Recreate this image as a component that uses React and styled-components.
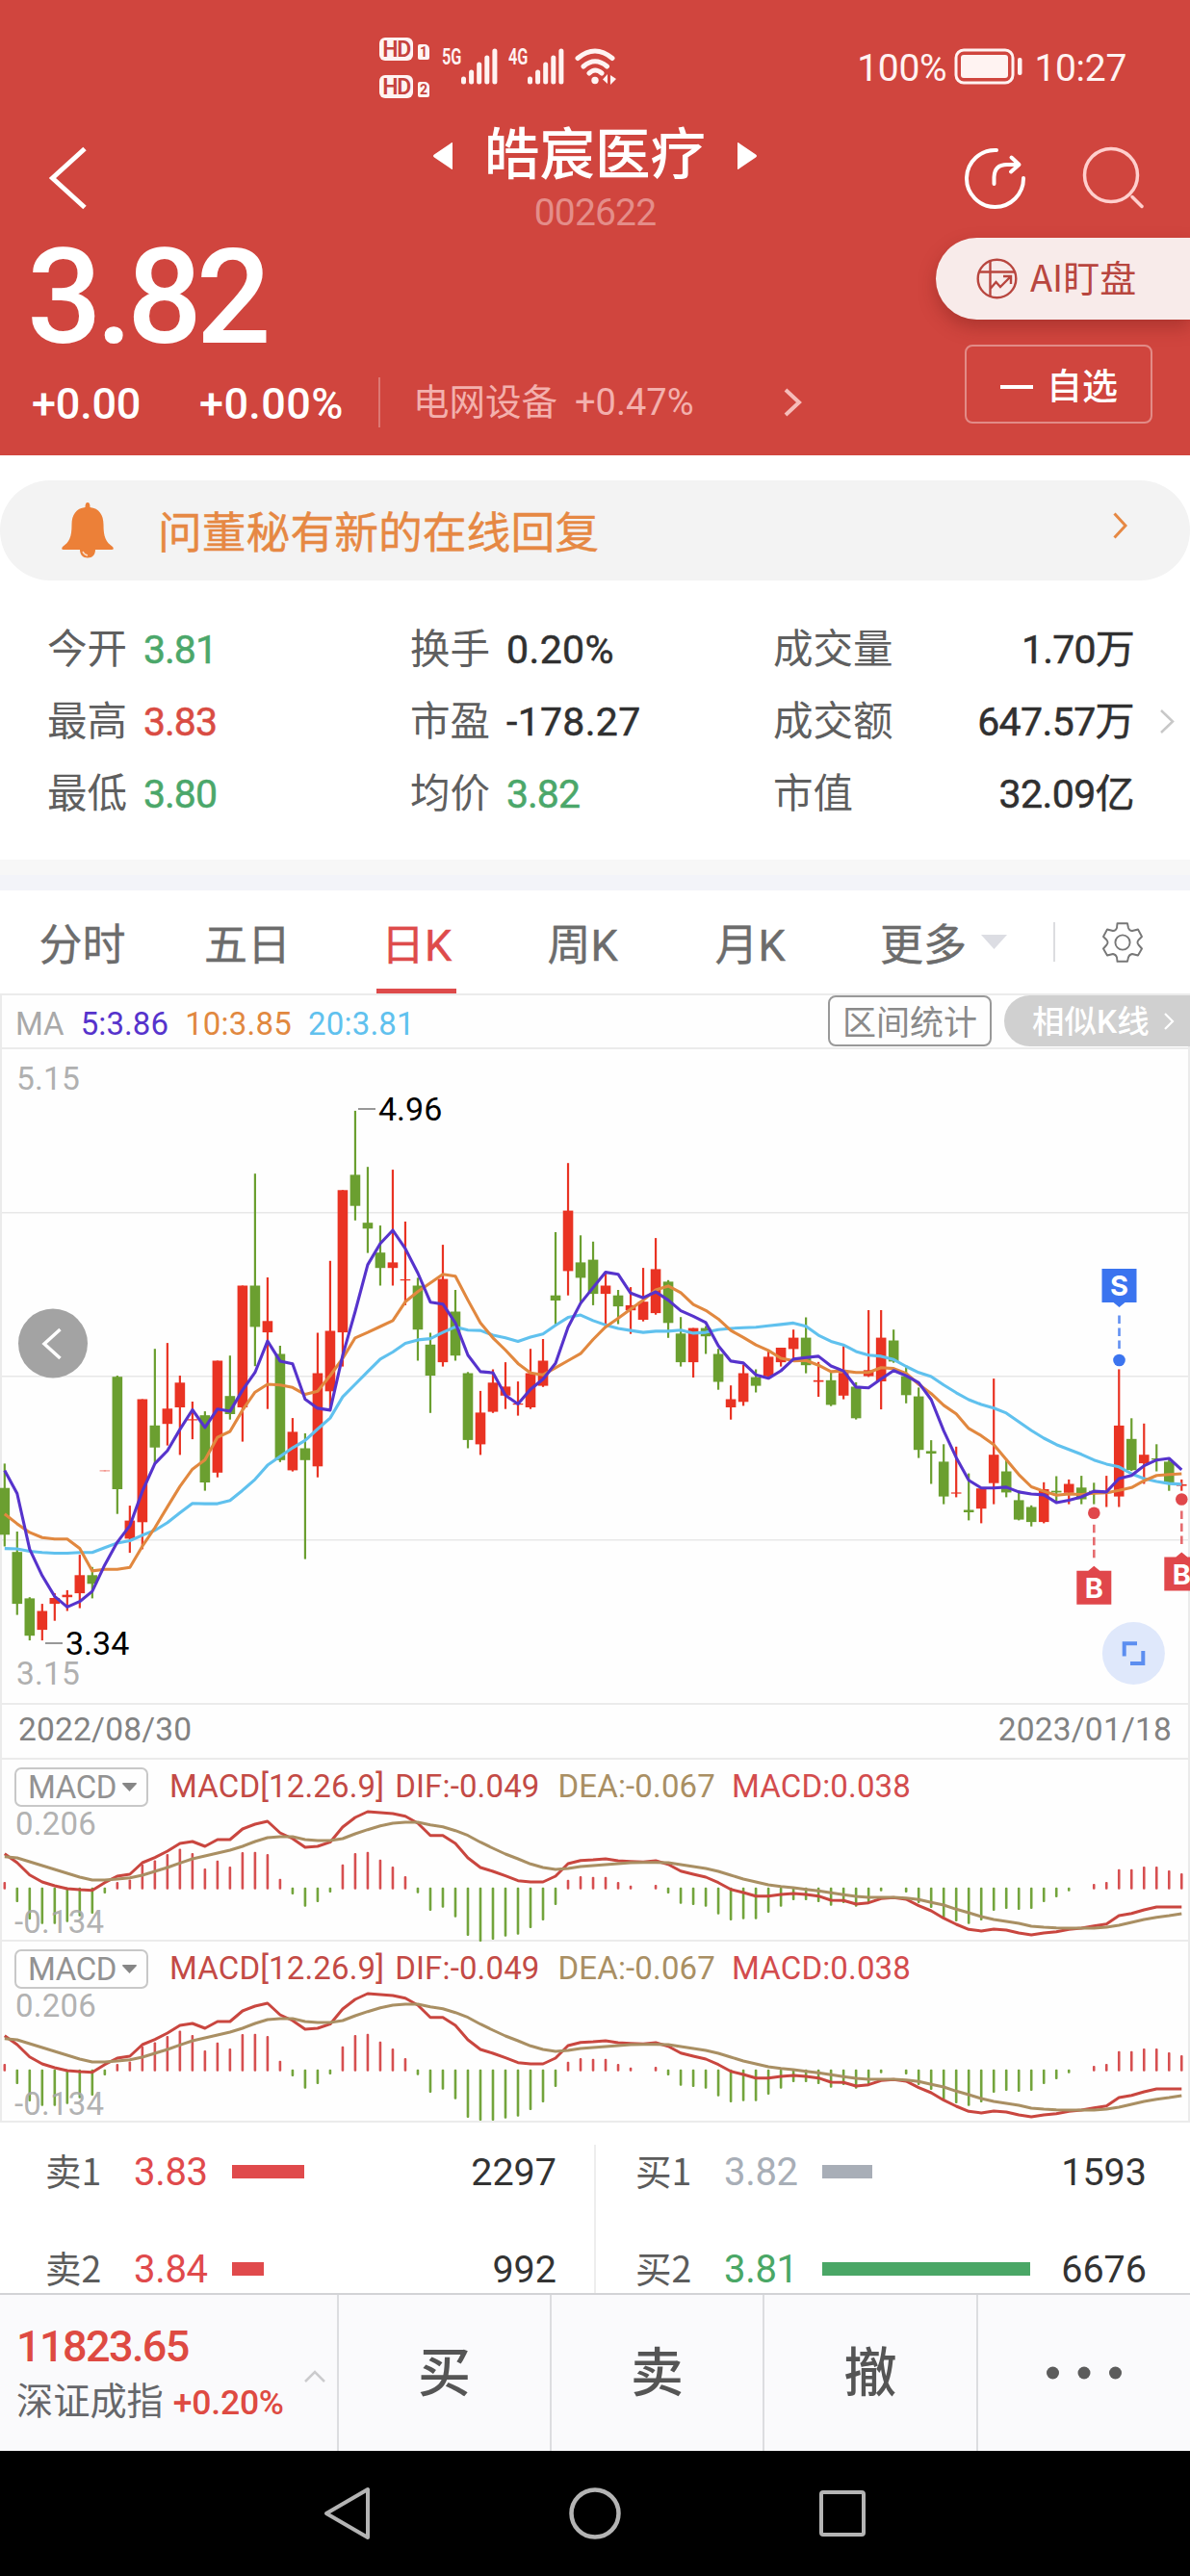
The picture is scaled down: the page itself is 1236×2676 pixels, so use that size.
import React from 'react'
import styled, { createGlobalStyle } from 'styled-components';

const GlobalStyle = createGlobalStyle`
  * {
    box-sizing: border-box;
  }

  body {
    margin: 0;
    background: #fff;
    font-family: Roboto, "Noto Sans CJK SC", sans-serif;
  }

  svg {
    display: block;
    flex-shrink: 0;
  }
`;

const Page = styled.div`
  width: 1236px;
  height: 2676px;
  overflow: hidden;
  display: flex;
  flex-direction: column;
  white-space: nowrap;
`;

const Header = styled.header`
  height: 473px;
  flex-shrink: 0;
  background: #d0453e;
  color: #fff;
`;

const StatusBar = styled.div`
  height: 120px;
  padding: 18px 66px 0 394px;
  display: flex;
  align-items: center;
  color: #fff3f2;
`;

const HdColumn = styled.div`
  display: flex;
  flex-direction: column;
  gap: 15px;
  margin: 3px 13px 0 0;
`;

const HdRow = styled.div`
  display: flex;
  align-items: flex-end;
  gap: 5px;
`;

const HdBadge = styled.span`
  width: 35px;
  height: 24px;
  border-radius: 6px;
  background: #fff3f2;
  color: #c5433d;
  font-size: 23px;
  font-weight: 600;
  line-height: 25px;
  letter-spacing: -1.5px;
  text-align: center;
`;

const SimBadge = styled.span`
  width: 12px;
  height: 16px;
  margin-bottom: 1px;
  border-radius: 2px 5px 2px 2px;
  background: #fff3f2;
  color: #c5433d;
  font-size: 14px;
  font-weight: 700;
  line-height: 17px;
  text-align: center;
`;

const NetworkType = styled.span`
  width: 20px;
  margin: 0 0 21px ${props => props.gap || 0}px;
  font-size: 24px;
  font-weight: 600;
  line-height: 24px;
  transform: scaleX(0.68);
  transform-origin: left center;
`;

const WifiSlot = styled.span`
  margin: 0 auto 0 11px;
`;

const BatterySlot = styled.span`
  margin: 0 11px 0 8px;
`;

const StatusText = styled.span`
  font-size: 39px;
  line-height: 40px;
  letter-spacing: -0.3px;
  margin-top: 3px;
`;

const NavRow = styled.div`
  height: 130px;
  display: grid;
  grid-template-columns: 1fr 338px 1fr;
`;

const NavLeft = styled.div`
  display: flex;
  align-items: center;
  padding-left: 47px;
`;

const NavRight = styled.div`
  display: flex;
  align-items: center;
  justify-content: flex-end;
  gap: 57px;
  padding-right: 46px;
`;

const TitleBlock = styled.div`
  padding-top: 9px;
`;

const TitleLine = styled.div`
  display: flex;
  align-items: center;
  justify-content: space-between;
  height: 66px;
  padding: 0 1px;
`;

const StockName = styled.h1`
  margin: 0;
  font-size: 57.5px;
  font-weight: 500;
  line-height: 66px;
`;

const StockCode = styled.div`
  color: #e48d89;
  font-size: 39px;
  line-height: 52px;
  letter-spacing: -0.8px;
  text-align: center;
`;

const QuoteRow = styled.div`
  display: flex;
  justify-content: space-between;
`;

const Price = styled.div`
  padding-left: 28px;
  height: 113px;
  font-size: 137px;
  font-weight: 500;
  line-height: 118px;
  letter-spacing: -6px;
`;

const ChangeRow = styled.div`
  display: flex;
  align-items: center;
  height: 110px;
  padding-left: 33px;
`;

const Change = styled.span`
  width: ${props => props.width}px;
  padding-top: 4px;
  font-size: 45px;
  font-weight: 500;
  line-height: 50px;
  letter-spacing: ${props => props.track}px;
`;

const Sector = styled.span`
  display: flex;
  align-items: center;
  height: 52px;
  padding-left: 34px;
  border-left: 2px solid #dd7873;
  color: #f3b0ad;
  font-size: 37.5px;
  line-height: 56px;
`;

const SectorChange = styled.span`
  margin: 0 94px 0 18px;
  font-size: 38px;
`;

const Actions = styled.div`
  display: flex;
  flex-direction: column;
  align-items: flex-end;
  margin-top: -3px;
`;

const AiButton = styled.div`
  display: flex;
  align-items: center;
  width: 264px;
  height: 85px;
  padding-left: 42px;
  border-radius: 43px 0 0 43px;
  background: #f8ebea;
  box-shadow: 0 8px 18px rgba(120, 30, 25, 0.4);
  color: #b8463f;
  font-family: "Noto Sans CJK SC", sans-serif;
  font-size: 38px;
  line-height: 60px;

  span {
    margin: -5px 0 0 13px;
  }
`;

const WatchButton = styled.div`
  display: flex;
  align-items: center;
  width: 195px;
  height: 82px;
  margin: 26px 39px 0 0;
  padding-left: 35px;
  border: 2px solid #e28b87;
  border-radius: 8px;
  font-size: 37px;
  font-weight: 500;
`;

const Minus = styled.span`
  width: 34px;
  height: 4px;
  margin: 6px 14px 0 0;
  background: #fff;
`;

const Notice = styled.div`
  display: flex;
  align-items: center;
  flex-shrink: 0;
  height: 104px;
  margin-top: 26px;
  padding: 0 65px 0 63px;
  border-radius: 52px;
  background: #f3f3f3;
  color: #e68843;
`;

const NoticeText = styled.span`
  flex: 1;
  margin: 7px 0 0 45px;
  font-size: 45.8px;
  line-height: 60px;
  -webkit-text-stroke: 0.4px currentColor;
`;

const NoticeArrow = styled.svg`
  margin-bottom: 11px;
`;

const Stats = styled.section`
  display: flex;
  align-items: center;
  flex-shrink: 0;
  height: 290px;
  padding: 3px 0 0 49px;
`;

const StatGrid = styled.div`
  display: grid;
  grid-template-columns: 377px 377px 375px;
  grid-auto-rows: 75px;
  margin-right: 26px;
`;

const Stat = styled.div`
  display: flex;
  align-items: center;
  gap: 17px;
  justify-content: ${props => props.spread ? 'space-between' : 'flex-start'};
  font-size: 41px;
  line-height: 60px;
`;

const StatLabel = styled.span`
  color: #5f5f5f;
  font-size: 41.5px;
`;

const StatValue = styled.span`
  color: ${props => props.color || '#303030'};
  letter-spacing: ${props => props.track || 0}px;
  -webkit-text-stroke: 0.5px currentColor;
`;

const Divider = styled.div`
  flex-shrink: 0;
  height: 32px;
  border-top: 16px solid #f7f7f7;
  background: #f3f4f9;
`;

const Tabs = styled.nav`
  display: grid;
  grid-template-columns: 171px 172px 179px 166px 182px 1fr;
  grid-template-rows: 107px;
  flex-shrink: 0;
  height: 107px;
  color: #6c6c6c;
  font-size: 45px;
  line-height: 115px;
  text-align: center;
`;

const Tab = styled.div`
  position: relative;
  height: 107px;
  color: ${props => props.active ? '#de4b4b' : '#6c6c6c'};
  -webkit-text-stroke: 0.4px currentColor;

  &::after {
    content: '';
    display: ${props => props.active ? 'block' : 'none'};
    position: absolute;
    left: 48px;
    bottom: 0;
    width: 83px;
    height: 5px;
    background: #de4b4b;
  }
`;

const MoreTab = styled.div`
  display: flex;
  align-items: center;
  height: 107px;
  padding-left: 44px;
`;

const MoreLabel = styled.span`
  margin: 7px 15px 0 0;
  -webkit-text-stroke: 0.4px currentColor;
`;

const TabSeparator = styled.span`
  width: 2px;
  height: 41px;
  margin: 0 49px 0 48px;
  background: #dcdde0;
`;

const ChartSection = styled.section`
  flex-shrink: 0;
  border-top: 2px solid #ebebeb;
  background: #fefefe;
  box-shadow: inset 2px 0 #ebebeb, inset -2px 0 #ebebeb;
`;

const MaRow = styled.div`
  display: flex;
  height: 56px;
  padding-left: 16px;
  border-bottom: 2px solid #ebebeb;
  font-size: 33px;
  line-height: 59px;
`;

const MaText = styled.span`
  margin-right: 17px;
  color: ${props => props.color};
  letter-spacing: ${props => props.track || 0}px;
`;

const RangeButton = styled.span`
  width: 170px;
  height: 53px;
  margin: 0 13px 0 auto;
  border: 2px solid #999;
  border-radius: 8px;
  color: #8a8a8a;
  font-size: 35px;
  line-height: 55px;
  text-align: center;
`;

const SimilarButton = styled.span`
  display: flex;
  align-items: center;
  width: 193px;
  height: 53px;
  padding-left: 29px;
  border-radius: 27px 0 0 27px;
  background: #d0d0d0;
  color: #fff;
  font-size: 33.5px;
  font-weight: 500;

  span {
    margin: 3px 14px 0 0;
    line-height: 56px;
  }
`;

const DateRow = styled.div`
  display: flex;
  justify-content: space-between;
  height: 57px;
  padding: 0 19px;
  border-top: 2px solid #ebebeb;
  color: #828282;
  font-size: 33.5px;
  line-height: 52px;
  letter-spacing: 0.2px;
`;

const Panel = styled.div`
  display: grid;
  height: ${props => props.last ? 190 : 189}px;
  border-top: 2px solid #ebebeb;
  border-bottom: ${props => props.last ? '2px solid #ebebeb' : 'none'};

  > * {
    grid-area: 1 / 1;
  }
`;

const PanelSvg = styled.svg`
  overflow: visible;
`;

const PanelTitle = styled.div`
  display: flex;
  align-items: center;
  height: 41px;
  margin-top: 8px;
  padding-left: 15px;
  font-size: 33px;
  z-index: 1;
`;

const IndicatorSelect = styled.span`
  display: flex;
  align-items: center;
  gap: 5px;
  width: 139px;
  height: 41px;
  margin-right: 22px;
  padding-left: 12px;
  border: 2px solid #c8c8c8;
  border-radius: 7px;
  color: #929292;
  line-height: 41px;

  span {
    width: 93px;
    letter-spacing: -0.4px;
  }
`;

const IndicatorText = styled.span`
  margin: -3px ${props => props.gap}px 0 0;
  color: ${props => props.color};
  letter-spacing: 0.15px;
`;

const OrderBook = styled.section`
  display: grid;
  grid-template-columns: 617px 1fr;
  flex-shrink: 0;
  height: 177px;
  overflow: hidden;
`;

const OrderSide = styled.div`
  padding-left: 47px;

  & + & {
    margin-top: 23px;
    padding-left: 41px;
    border-left: 2px solid #eee;
  }

  & + & > div:first-child {
    margin-top: -23px;
  }
`;

const OrderRow = styled.div`
  display: flex;
  align-items: center;
  width: 531px;
  height: 101px;
  padding-top: 1px;
  line-height: 101px;
`;

const OrderLabel = styled.span`
  width: 92px;
  margin-top: -5px;
  color: #5c5c5c;
  font-family: "Noto Sans CJK SC", sans-serif;
  font-size: 37.5px;
`;

const OrderPrice = styled.span`
  width: 102px;
  color: ${props => props.color};
  font-size: 40px;
  letter-spacing: -0.3px;
`;

const VolumeBar = styled.span`
  height: 14px;
  background: ${props => props.color};
`;

const Volume = styled.span`
  margin-left: auto;
  color: #333;
  font-size: 39.5px;
`;

const TradeBar = styled.footer`
  display: grid;
  grid-template-columns: 350px 221px 221px 222px 1fr;
  flex-shrink: 0;
  height: 164px;
  border-top: 2px solid #d2d3d6;
  background: #fafafc;
`;

const IndexBox = styled.div`
  display: flex;
  align-items: center;
  justify-content: space-between;
  padding: 6px 12px 0 17px;
`;

const IndexPrice = styled.div`
  color: #de4a42;
  font-size: 45px;
  font-weight: 500;
  line-height: 54px;
  letter-spacing: -1.6px;
`;

const IndexName = styled.div`
  color: #66676b;
  font-size: 38.2px;
  line-height: 60px;

  span {
    margin-left: 10px;
    color: #de4a42;
    font-size: 35.5px;
    font-weight: 500;
    letter-spacing: -0.2px;
  }
`;

const TradeButton = styled.div`
  display: flex;
  align-items: center;
  justify-content: center;
  border-left: 2px solid #dcdde0;
  color: #555;
  font-size: 55px;
  font-weight: 500;
  line-height: 80px;
`;

const SystemNav = styled.div`
  display: flex;
  align-items: center;
  justify-content: center;
  gap: 204px;
  flex: 1;
  padding-right: 1px;
  background: #000;
`;

const RED = '#e93323';
const GREEN = '#6b9f30';
const STEP = 13.005;
const x = index => 4.8 + index * STEP;

// [up, high, top of body, bottom of body, low]
const candles = [
  [0, 430.4, 455.7, 504.3, 516.5], [0, 501, 522.2, 576.1, 587.6], [0, 569.2, 570.4, 609.2, 614.1], [1, 576.1, 583.5, 603.1, 614.1],
  [1, 565.1, 570, 576.1, 593.7], [1, 561.9, 566.7, 569.2, 583.5], [1, 525.1, 546.3, 565.1, 580.6], [0, 537.8, 546.3, 555.3, 570.4],
  [1, 437.4, 437.4, 438.4, 438.4], [0, 339, 340.2, 457, 482.7], [1, 474.1, 489.6, 508.4, 523.1], [1, 363.5, 363.5, 491.3, 519.4],
  [0, 311.2, 390.8, 413.7, 431.2], [1, 305.1, 373.3, 389.2, 411.6], [1, 339, 346.3, 372, 421.4], [1, 366, 384.3, 385.5, 405.1],
  [0, 376.1, 380.2, 450, 458.6], [1, 323.5, 323.5, 439.8, 444.7], [0, 318.2, 360.2, 379, 384.7], [1, 245.5, 245.5, 372, 407.6],
  [0, 129.2, 245.5, 288.4, 329.2], [1, 237, 282.3, 294.1, 373.7], [0, 308, 316.5, 426.8, 428.8], [1, 383.1, 397.4, 437.4, 438.6],
  [0, 399, 414.5, 426.8, 529.6], [1, 294.5, 336.5, 433.3, 444.7], [1, 219.8, 292.5, 355.3, 374.9], [1, 146.3, 146.3, 294.1, 329.6],
  [0, 63.9, 130.4, 162.7, 177.8], [0, 122.2, 180.2, 186.3, 211.6], [0, 183.1, 211.2, 227.2, 245.5], [1, 125.1, 221.4, 227.2, 245.5],
  [1, 179, 239, 240.2, 265.9], [0, 237.4, 245.5, 291.2, 323.5], [0, 294.5, 306.8, 339, 377.8], [1, 203.1, 238.6, 325.1, 329.6],
  [0, 250, 272.5, 318.2, 323.5], [0, 335.3, 336.5, 405.9, 414.5], [1, 354.9, 377.4, 410.4, 421.4], [1, 332.5, 346.3, 376.6, 377.8],
  [1, 325.1, 350.4, 359.8, 373.7], [1, 345.1, 368, 369.2, 380.6], [1, 311.2, 336.5, 372, 373.7], [1, 301, 323.5, 349.6, 350.8],
  [0, 190, 255.7, 261, 287.6], [1, 118.2, 167.6, 230.4, 255.7], [0, 193.3, 221.4, 237.4, 265.1], [0, 199.8, 218.6, 254.1, 265.9],
  [1, 232.4, 245.5, 254.1, 289.6], [0, 250, 255.7, 267.1, 285.5], [1, 247.1, 265.9, 271.2, 295.7], [1, 227.1, 262.2, 281, 282.7],
  [1, 196.1, 228.4, 274.1, 275.7], [0, 239.8, 241.4, 284.3, 299.8], [0, 278.2, 295.3, 325.1, 329.6], [1, 289.6, 289.6, 325.1, 341],
  [0, 287.6, 289.6, 298.2, 316.5], [0, 311.2, 316.5, 345.5, 353.7], [1, 349.2, 363.5, 372, 384.7], [1, 327.6, 336.5, 366.3, 370.4],
  [0, 332.5, 340.6, 349.6, 356.5], [1, 314.1, 319.4, 339.8, 341.4], [1, 310, 310, 325.1, 329.6], [1, 291.2, 299.6, 311.4, 321.5],
  [0, 278.5, 299.6, 328.2, 336.6], [1, 324.8, 343.8, 345.5, 361], [0, 334.1, 343.8, 369.4, 370.7], [1, 308.4, 336.2, 359.8, 363.6],
  [0, 345.9, 350.5, 383.3, 384.6], [1, 271, 333.3, 339.6, 340.4], [1, 271, 299.6, 345, 374.1], [0, 291.2, 302.5, 324.4, 325.7],
  [0, 328.6, 339.6, 359.3, 367.8], [0, 351.4, 360.6, 416.2, 424.6], [0, 406.1, 417.4, 420, 451.5], [0, 410.3, 428.4, 464.6, 472.6],
  [1, 412.8, 460.4, 461.6, 465.4], [0, 440.6, 478.5, 481, 489.4], [1, 455.3, 456.2, 477.2, 492.4], [1, 342.1, 421.2, 450.7, 472.6],
  [0, 425.8, 438.5, 460.4, 465.4], [0, 458.3, 468.4, 488.6, 489.4], [0, 473.8, 475.5, 491.1, 495.7], [1, 449.8, 457, 491.1, 492.4],
  [0, 443.5, 458.7, 460.4, 471.7], [1, 446.9, 451.5, 460.8, 472.6], [0, 443.1, 455.3, 467.5, 472.6], [0, 450.3, 458.7, 460, 472.6],
  [1, 443.1, 460, 461.2, 475.5], [1, 332.4, 390.9, 464.6, 475.5], [0, 383.3, 404.8, 437.2, 438.1], [1, 388.8, 421.2, 430.1, 451.5],
  [0, 410.3, 425, 426.3, 438.5], [0, 425.8, 428.4, 450.7, 458.7], [1, 446.9, 451.9, 453.6, 458.7],
];

const ma5 = [
  437.4, 461.5, 519.4, 546.8, 568.4, 579.4, 573.7, 563.1, 535.7, 512.1, 494.9, 459, 430.4, 417, 394.9, 374.5, 392.9, 373.7, 376.1,
  354.1, 335.7, 303.1, 323.9, 326.7, 363.5, 372.9, 374.9, 318.2, 272.5, 223.9, 201.8, 188, 207.1, 232.5, 262.7, 264.7, 284.3, 317.8,
  334.9, 336.1, 359.4, 368.4, 353.3, 342.7, 326.3, 288.8, 263.9, 247.6, 231.6, 233.7, 253.3, 258.2, 252, 260.6, 271.6, 277.4, 283.9,
  308, 323.9, 325.9, 338.2, 341.8, 334, 321.9, 320.2, 318.9, 329, 334.1, 350.9, 351.8, 342.5, 333.7, 339.1, 346.3, 364, 396.4,
  424.2, 447.7, 455.7, 455.7, 454.9, 459.9, 462, 462.9, 470.9, 468.4, 465, 459.1, 459.9, 446, 442.7, 432.6, 426.7, 425, 436.8,
];

const ma10 = [
  482.7, 492.9, 501.9, 507.2, 508.8, 508.8, 518.6, 541.9, 540.3, 540.3, 538.2, 516.2, 497, 475.4, 454.1, 436.2, 426.4, 403.1, 397,
  374.9, 356.2, 348, 348.8, 351.3, 358.6, 355.3, 339, 321.1, 299.8, 294.1, 288, 281.9, 262.3, 251.7, 242.7, 233.7, 235.7, 260.6,
  284.3, 299.8, 312.5, 326.4, 336.2, 338.2, 330.9, 323.5, 316.2, 301.5, 288.4, 279.4, 270, 260.6, 250, 245.9, 252.9, 265.1, 271.3,
  280.2, 292.1, 299.4, 307.2, 312.9, 321, 323.6, 323.2, 328.2, 334.9, 334.1, 335.8, 335.8, 330.7, 331.6, 336.6, 348, 357.7, 369.9,
  378.7, 393.9, 401.4, 410.7, 426.3, 441.8, 454.5, 459.1, 463.3, 462, 462.5, 461.2, 460.8, 458.3, 455.3, 448.2, 442.7, 441.8, 441,
];

const ma20 = [
  518.6, 519, 521.5, 522.7, 523.5, 523.5, 522.7, 522.7, 517.8, 512.9, 510.5, 504.8, 499.8, 491.7, 481.5, 471.7, 472.1, 472.1, 468.8,
  458.2, 446.8, 432.1, 423.1, 414.1, 406.4, 394.5, 383.1, 361.1, 348, 334.9, 321.9, 314.5, 305.5, 301.9, 300.6, 294.1, 288.4, 291.7,
  292.1, 297, 299.8, 303.5, 299, 295.7, 286.8, 278.6, 276.1, 281.9, 286.4, 290, 292.1, 294.1, 292.9, 292.9, 291.7, 294.9, 294.1,
  291.2, 290, 289.2, 288.8, 287.2, 285.9, 284.4, 287.8, 297.1, 303.4, 307.2, 313.9, 317.7, 318.9, 322.3, 329.5, 335.8, 340, 348.8,
  356.8, 364, 369, 372.8, 377.9, 387.1, 396, 404, 410.7, 415.7, 420.8, 426.7, 430.9, 433.8, 441, 446, 449, 451.1, 451.9,
];

const histogram = [
  6.7, -14.3, -32.3, -37, -37, -35, -29, -26.3, -5.3, 6.7, 9.3, 25, 29.3, 35.7, 41.3, 36.7, 20.7, 29, 22.7, 37.7, 38, 35.7, 10,
  -6.3, -19, -14.3, -4.3, 25, 36.7, 38, 30, 22.7, 12.7, -5, -23.3, -20, -30, -49.3, -55.3, -53.3, -50, -48, -41.3, -33.3, -17.3,
  9, 12.7, 12, 12, 6.7, 3, 0, 3.7, -5.3, -16, -17.3, -19, -27, -33.3, -32, -32, -25.3, -19, -12.3, -12.3, -14.3, -18, -15.3, -19,
  -15.3, -3, 0, -4.3, -15.3, -20.3, -30.3, -34.3, -37, -33.3, -23.3, -21.3, -22.3, -21.3, -14.3, -9.3, -3, 0, 4.7, 6.7, 20, 20,
  22.7, 22.7, 18.7, 15.7,
];

const dif = [
  98.7, 108, 120.7, 128, 132, 135, 136, 136.7, 128.7, 122, 120, 108, 102.7, 96, 88, 86, 91, 84, 84, 73, 68, 65, 77, 83, 92, 91,
  86.7, 71, 61, 55, 56, 57, 59.7, 67, 79.7, 79.7, 88, 103, 113, 117, 121.7, 126.7, 128, 128, 122, 109, 105.7, 105, 104, 106,
  106.7, 107.3, 106, 109.7, 116.7, 120, 123, 128.7, 135.7, 139, 142.7, 142.7, 141, 140, 141, 142.7, 147, 147.3, 151, 149.7,
  145.3, 144.3, 146, 152.7, 158, 165.7, 172, 177.3, 179, 177, 178, 181, 183, 181, 179.7, 177.3, 176, 173.7, 171.7, 163, 160.7,
  157, 154, 154, 154,
];

const dea = [
  101.7, 103, 107, 111, 115, 119, 123, 126, 126, 125, 123.7, 121, 117, 113, 108.3, 104, 101, 98, 95, 91, 86, 82, 81, 81, 84, 85,
  85, 83, 78, 73.7, 69.7, 67, 66, 66, 68.7, 70.7, 74.7, 79.7, 86.7, 93, 99, 104, 109.3, 113, 115, 114, 112, 111, 110, 109, 108,
  107.7, 107.7, 108, 110, 112, 114, 117, 121, 125, 128, 131, 132.7, 134, 135.7, 137.3, 139.3, 141.3, 143, 144, 144, 144, 144.7,
  146.3, 149.3, 152, 156.3, 160, 164, 167, 169, 171, 174, 175, 175.7, 176, 176, 176, 175, 173, 170, 167, 164.7, 163, 161,
];

const stats = [
  { label: '今开', value: '3.81', color: '#4ba76a', track: -1 },
  { label: '换手', value: '0.20%', track: 0.4 },
  { label: '成交量', value: '1.70万', track: -0.8, spread: 1 },
  { label: '最高', value: '3.83', color: '#d94c43', track: -1 },
  { label: '市盈', value: '-178.27', track: 0.3 },
  { label: '成交额', value: '647.57万', track: -0.6, spread: 1 },
  { label: '最低', value: '3.80', color: '#4ba76a', track: -1 },
  { label: '均价', value: '3.82', color: '#4ba76a', track: -1 },
  { label: '市值', value: '32.09亿', track: -0.6, spread: 1 },
];

const tabs = ['分时', '五日', '日K', '周K', '月K'];

const orders = [
  [
    { label: '卖1', price: '3.83', volume: 2297, bar: 75, color: '#e04a4c' },
    { label: '卖2', price: '3.84', volume: 992, bar: 33, color: '#e04a4c' },
  ],
  [
    { label: '买1', price: '3.82', volume: 1593, bar: 52, color: '#a8aeb7' },
    { label: '买2', price: '3.81', volume: 6676, bar: 216, color: '#4aa766' },
  ],
];

const toPoints = values => values.map((y, index) => `${x(index).toFixed(1)},${y}`).join(' ');

const Chevron = ({ width, height, color, stroke }) => (
  <svg width={width} height={height} viewBox={`0 0 ${width} ${height}`} fill="none" stroke={color} strokeWidth={stroke}>
    <path d={`M2 2L${width - 3} ${height / 2}L2 ${height - 2}`} />
  </svg>
);

const Signal = () => (
  <svg width="38" height="38" viewBox="0 0 38 38" fill="currentColor">
    {[8, 15, 23, 30, 37].map((height, index) =>
      <rect key={height} x={index * 8.1} y={37.5 - height} width="5" height={height} rx="2.5" />
    )}
  </svg>
);

const Wifi = () => (
  <svg width="44" height="38" viewBox="0 0 44 38" fill="none" stroke="currentColor" strokeWidth="5" strokeLinecap="round">
    <path d="M3 10.5Q21 -4.5 39 10.5M9 19Q21 8.5 33.5 19M15 26Q21 20 28 26" />
    <circle cx="21" cy="33.5" r="3.7" fill="currentColor" stroke="none" />
    <path d="M29 32.5L34 27V37ZM37 28V38L43 32Z" fill="currentColor" stroke="none" />
  </svg>
);

const Battery = () => (
  <svg width="72" height="38" viewBox="0 0 72 38">
    <rect x="2" y="2" width="59" height="34" rx="8" fill="none" stroke="currentColor" strokeWidth="3" />
    <rect x="7" y="7" width="49" height="24" rx="3" fill="currentColor" />
    <rect x="66" y="10" width="4.5" height="18" rx="2" fill="currentColor" />
  </svg>
);

const Marker = ({ cx, cy, type }) => {
  const sell = type === 'S';
  const color = sell ? '#3b74ef' : '#e0474b';
  const dir = sell ? -1 : 1;
  return (
    <g transform={`translate(${cx} ${cy})`} fill={color}>
      <circle r="6.3" />
      {[12, 25, 38].map(offset =>
        <rect key={offset} x="-1.3" y={sell ? -offset - 8.5 : offset} width="2.6" height="8.5" opacity="0.8" />
      )}
      <path d={`M-6 ${60 * dir}L0 ${55 * dir}L6 ${60 * dir}H18V${95 * dir}H-18V${60 * dir}Z`} />
      <text y={sell ? -67 : 88} fill="#fff" fontFamily="Inter" fontSize="29" fontWeight="700" textAnchor="middle">{type}</text>
    </g>
  );
};

const CandleChart = () => (
  <svg width="1236" height="679" viewBox="0 0 1236 679">
    {[170, 340, 510].map(y => <rect key={y} x="2" y={y - 1} width="1232" height="1.5" fill="#e8e8e8" />)}
    <g fontSize="33.5" fill="#b0b0b0" letterSpacing="0.2">
      <text x="17" y="42">5.15</text>
      <text x="17" y="660">3.15</text>
    </g>
    {candles.map(([up, high, top, bottom, low], index) => (
      <g key={index} fill={up ? RED : GREEN} opacity={index === 8 ? 0.6 : 1}>
        <rect x={x(index) - 1.1} y={high} width="2.2" height={low - high} />
        <rect x={x(index) - 5.3} y={top} width="10.6" height={bottom - top} />
      </g>
    ))}
    <g fill="none" strokeWidth="3.1" strokeLinejoin="round">
      <polyline points={toPoints(ma20)} stroke="#60c1ee" />
      <polyline points={toPoints(ma10)} stroke="#e1883f" />
      <polyline points={toPoints(ma5)} stroke="#5633cc" />
    </g>
    <path d="M372 62H390M47 617H65" stroke="#777" strokeWidth="1.500" />
    <g fontSize="34" fill="#000">
      <text x="393" y="74">4.96</text>
      <text x="68" y="629">3.34</text>
    </g>
    <Marker type="S" cx={1162.5} cy={323} />
    <Marker type="B" cx={1136.3} cy={481.8} />
    <Marker type="B" cx={1227.3} cy={467.5} />
    <circle cx="55" cy="305.600" r="36" fill="#a3a3a3" />
    <path d="M62.500 291L46 306L62.500 321" fill="none" stroke="#fff" strokeWidth="3.500" />
    <circle cx="1177.400" cy="627.500" r="32.500" fill="#dfe8fb" />
    <path d="M1167.700 630.500V617.300H1181M1174 638H1187.300V625" fill="none" stroke="#5c8ef0" strokeWidth="4" />
  </svg>
);

const MacdPanel = ({ last }) => (
  <Panel last={last ? 1 : 0}>
    <PanelSvg width="1236" height="186" viewBox="0 1 1236 186">
      {histogram.map((value, index) => value !== 0 && (
        <rect
          key={index}
          x={x(index) - 1.3}
          y={value > 0 ? 134.7 - value : 133.7}
          width="2.6"
          height={Math.min(Math.abs(value) + 1, last ? 53.3 : 60)}
          rx="1"
          fill={value > 0 ? '#d64f50' : '#73a43c'}
        />
      ))}
      <g fill="none" strokeWidth="3" strokeLinejoin="round">
        <polyline points={toPoints(dif)} stroke="#c9463f" />
        <polyline points={toPoints(dea)} stroke="#a98f63" />
      </g>
      <g fontSize="33" fill="#a8a8a8" fillOpacity="0.9" letterSpacing="0.2">
        <text x="16" y="79">0.206</text>
        <text x="15" y="181">-0.134</text>
      </g>
    </PanelSvg>
    <PanelTitle>
      <IndicatorSelect>
        <span>MACD</span>
        <svg width="15" height="9" viewBox="0 0 15 9" fill="#868686"><path d="M0 1Q0 0 1 0H14Q15 0 15 1L7.5 9Z" /></svg>
      </IndicatorSelect>
      <IndicatorText color="#c34a45" gap={11}>MACD[12.26.9]</IndicatorText>
      <IndicatorText color="#c34a45" gap={19}>DIF:-0.049</IndicatorText>
      <IndicatorText color="#a98f63" gap={17}>DEA:-0.067</IndicatorText>
      <IndicatorText color="#d34c4d" gap={0}>MACD:0.038</IndicatorText>
    </PanelTitle>
  </Panel>
);

export default function App() {
  return (
    <>
      <GlobalStyle />
      <Page>
        <Header>
          <StatusBar>
            <HdColumn>
              {[1, 2].map(sim =>
                <HdRow key={sim}>
                  <HdBadge>HD</HdBadge>
                  <SimBadge>{sim}</SimBadge>
                </HdRow>
              )}
            </HdColumn>
            <NetworkType>5G</NetworkType>
            <Signal />
            <NetworkType gap={11}>4G</NetworkType>
            <Signal />
            <WifiSlot><Wifi /></WifiSlot>
            <StatusText>100%</StatusText>
            <BatterySlot><Battery /></BatterySlot>
            <StatusText>10:27</StatusText>
          </StatusBar>
          <NavRow>
            <NavLeft>
              <svg width="50" height="70" viewBox="0 0 50 70" fill="none" stroke="#fff" strokeWidth="5">
                <path d="M41 4.5L7.5 35L41 65.5" />
              </svg>
            </NavLeft>
            <TitleBlock>
              <TitleLine>
                <svg width="20" height="28" viewBox="0 0 20 28" fill="#fff"><path d="M20 1V27Q20 29 18 27L1 15.5Q-1 14 1 12.5L18 1Q20 -1 20 1Z" /></svg>
                <StockName>皓宸医疗</StockName>
                <svg width="20" height="28" viewBox="0 0 20 28" fill="#fff"><path d="M0 1V27Q0 29 2 27L19 15.5Q21 14 19 12.5L2 1Q0 -1 0 1Z" /></svg>
              </TitleLine>
              <StockCode>002622</StockCode>
            </TitleBlock>
            <NavRight>
              <svg width="66" height="66" viewBox="0 0 66 66" fill="none" stroke="#fff" strokeWidth="4" strokeLinecap="round" strokeLinejoin="round">
                <path d="M34 4A29.5 29.5 0 1 0 62 33" />
                <path d="M31.5 39V32Q32 19 45 19H57M49.5 11.5L57.5 19L49 26.5" />
              </svg>
              <svg width="66" height="66" viewBox="0 0 66 66" fill="none" stroke="#ffcfcd" strokeWidth="3.500" strokeLinecap="round">
                <circle cx="30" cy="30" r="27.5" />
                <path d="M52 52.5L62 62.5" />
              </svg>
            </NavRight>
          </NavRow>
          <QuoteRow>
            <div>
              <Price>3.82</Price>
              <ChangeRow>
                <Change width={174} track={-0.2}>+0.00</Change>
                <Change width={186} track={0.4}>+0.00%</Change>
                <Sector>
                  电网设备
                  <SectorChange>+0.47%</SectorChange>
                  <Chevron width={19} height={30} color="#f6bdba" stroke={4} />
                </Sector>
              </ChangeRow>
            </div>
            <Actions>
              <AiButton>
                <svg width="43" height="43" viewBox="0 0 43 43" fill="none" stroke="#b8463f" strokeWidth="2.400">
                  <circle cx="21.5" cy="21.5" r="19.8" />
                  <path d="M3.5 14.5H39.5M14.5 3V40M14.5 32L20.5 25L25 30L35 20M28 19H36V27" />
                </svg>
                <span>AI盯盘</span>
              </AiButton>
              <WatchButton><Minus />自选</WatchButton>
            </Actions>
          </QuoteRow>
        </Header>

        <Notice>
          <svg width="56" height="60" viewBox="0 0 56 60" fill="#ec8038">
            <path d="M28 1C26 1 25.5 3 25.5 6C16 7 11.5 14 11.5 24C11.5 37 9 42 2 47Q0 50 3 50H53Q56 50 54 47C47 42 44.5 37 44.5 24C44.5 14 40 7 30.5 6C30.5 3 30 1 28 1Z" />
            <path d="M20 50C20 55 23 58.5 28 58.5C33 58.5 36 55 36 50Z" />
            <path d="M23 52Q24.5 55.5 28 56" fill="none" stroke="#f8dcc8" strokeWidth="1.500" />
          </svg>
          <NoticeText>问董秘有新的在线回复</NoticeText>
          <NoticeArrow width="15" height="28" viewBox="0 0 15 28" fill="none" stroke="#e68843" strokeWidth="3">
            <path d="M1.5 1.5L13 14L1.5 26.5" />
          </NoticeArrow>
        </Notice>

        <Stats>
          <StatGrid>
            {stats.map(({ label, value, color, track, spread }) =>
              <Stat key={label} spread={spread}>
                <StatLabel>{label}</StatLabel>
                <StatValue color={color} track={track}>{value}</StatValue>
              </Stat>
            )}
          </StatGrid>
          <Chevron width={17} height={27} color="#c8c8c8" stroke={2.5} />
        </Stats>
        <Divider />

        <Tabs>
          {tabs.map(tab => <Tab key={tab} active={tab === '日K' ? 1 : 0}>{tab}</Tab>)}
          <MoreTab>
            <MoreLabel>更多</MoreLabel>
            <svg width="27" height="15" viewBox="0 0 27 15" fill="#dcdde3"><path d="M0 0H27L13.5 15Z" /></svg>
            <TabSeparator />
            <svg width="42" height="42" viewBox="0 0 42 42" fill="none" stroke="#777" strokeWidth="1.900" strokeLinejoin="round">
              <path d="M15.5 1.2H26L27 6Q28 9 31 9L37 7.5L41 15L37.5 18.5Q35.5 21 37.5 23.5L41 27.5L37 34.5L31 33Q28 33.500 27 36.500L26 40.800H15.500L15 36.500Q14 33.500 11 33L5 34.500L1 27.500L4.500 23.500Q6.500 21 4.500 18.500L1 15L5 7.500L11 9Q14 9 15 6Z" />
              <circle cx="21" cy="21" r="7.600" />
            </svg>
          </MoreTab>
        </Tabs>

        <ChartSection>
          <MaRow>
            <MaText color="#a9a9a9">MA</MaText>
            <MaText color="#5633cc" track={0.1}>5:3.86</MaText>
            <MaText color="#e1883f" track={0.2}>10:3.85</MaText>
            <MaText color="#60c1ee" track={0.2}>20:3.81</MaText>
            <RangeButton>区间统计</RangeButton>
            <SimilarButton>
              <span>相似K线</span>
              <Chevron width={13} height={20} color="#fff" stroke={2.2} />
            </SimilarButton>
          </MaRow>
          <CandleChart />
          <DateRow>
            <span>2022/08/30</span>
            <span>2023/01/18</span>
          </DateRow>
          <MacdPanel />
          <MacdPanel last />
        </ChartSection>

        <OrderBook>
          {orders.map((side, index) =>
            <OrderSide key={index}>
              {side.map(({ label, price, volume, bar, color }) =>
                <OrderRow key={label}>
                  <OrderLabel>{label}</OrderLabel>
                  <OrderPrice color={color}>{price}</OrderPrice>
                  <VolumeBar color={color} style={{ width: bar }} />
                  <Volume>{volume}</Volume>
                </OrderRow>
              )}
            </OrderSide>
          )}
        </OrderBook>

        <TradeBar>
          <IndexBox>
            <div>
              <IndexPrice>11823.65</IndexPrice>
              <IndexName>深证成指<span>+0.20%</span></IndexName>
            </div>
            <svg width="22" height="13" viewBox="0 0 22 13" fill="none" stroke="#cbcbcd" strokeWidth="2.500"><path d="M1 12L11 2L21 12" /></svg>
          </IndexBox>
          <TradeButton>买</TradeButton>
          <TradeButton>卖</TradeButton>
          <TradeButton>撤</TradeButton>
          <TradeButton>
            <svg width="80" height="14" viewBox="0 0 80 14" fill="#5c5c5c">
              <circle cx="7.5" cy="7" r="6.5" /><circle cx="40" cy="7" r="6.5" /><circle cx="72.5" cy="7" r="6.5" />
            </svg>
          </TradeButton>
        </TradeBar>

        <SystemNav>
          <svg width="50" height="56" viewBox="0 0 50 56" fill="none" stroke="#b4b4b4" strokeWidth="4" strokeLinejoin="round">
            <path d="M46 3V53L3 28Z" />
          </svg>
          <svg width="56" height="56" viewBox="0 0 56 56" fill="none" stroke="#b4b4b4" strokeWidth="4.500"><circle cx="28" cy="28" r="24.5" /></svg>
          <svg width="50" height="50" viewBox="0 0 50 50" fill="none" stroke="#b4b4b4" strokeWidth="4"><rect x="3" y="3" width="44" height="44" rx="2" /></svg>
        </SystemNav>
      </Page>
    </>
  )
}
